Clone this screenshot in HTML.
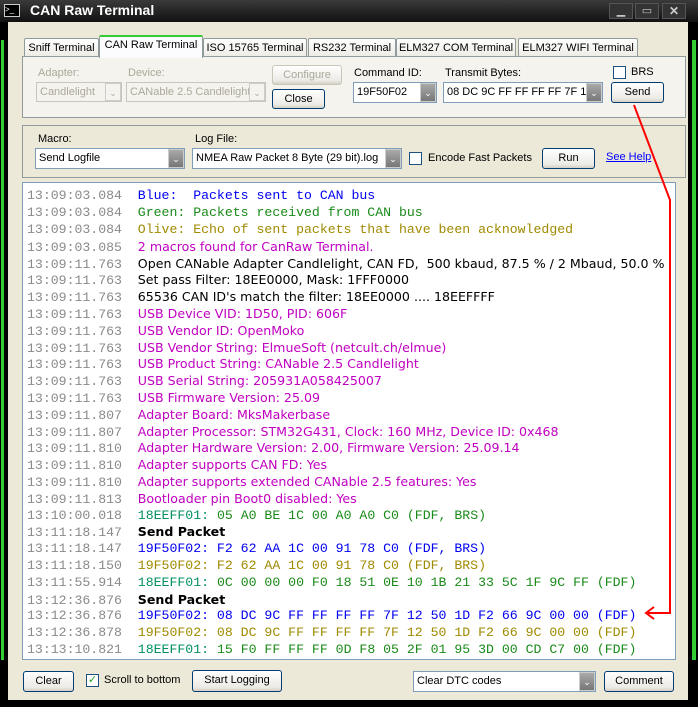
<!DOCTYPE html>
<html><head><style>
*{margin:0;padding:0;box-sizing:border-box}
body{width:698px;height:707px;background:#000;position:relative;overflow:hidden;font-family:"Liberation Sans",sans-serif;font-size:11px;color:#000}
.a{position:absolute}
.win{left:8px;top:22px;width:680px;height:678px;background:#ece9d8}
.title{left:0;top:0;width:698px;height:22px;background:linear-gradient(#3a3a3a,#111)}
.gb{background:#3c3;}
.tab{position:absolute;top:38px;height:19px;border:1px solid #919b9c;border-bottom:none;background:linear-gradient(#fff,#ecebe5);font-size:11px;padding:3px 0 0;text-align:center;white-space:nowrap;border-radius:2px 2px 0 0;overflow:hidden}
.panel{position:absolute;border:1px solid #919b9c;background:#f4f3ee}
.btn{position:absolute;border:1px solid #003c74;border-radius:3px;background:linear-gradient(#fff,#ecebe6 80%,#d6d0c5);text-align:center;font-size:11px;line-height:19px}
.cb{position:absolute;border:1px solid #7f9db9;background:#fff;font-size:11px;padding:3px 3px;white-space:nowrap;overflow:hidden}
.dd{position:absolute;right:0;top:0;bottom:0;width:16px;background:linear-gradient(#a9a9a9,#777);border:1px solid #ccc;color:#fff;font-size:9px;text-align:center;line-height:18px}
.lbl{position:absolute;font-size:11px}
.chk{position:absolute;width:13px;height:13px;border:1px solid #1c5180;background:#fff}
.log{left:22px;top:182px;width:654px;height:478px;background:#fff;border:1px solid #7f9db9}
.ln{position:absolute;left:4px;height:17px;white-space:pre;font-family:"Liberation Mono",monospace;font-size:13.2px;line-height:17px}
.ts{color:#8a8a8a}
.p{font-family:"DejaVu Sans",sans-serif;font-size:12.6px}
.B{color:#0000f0}.G{color:#1a8a1a}.O{color:#a08a00}.M{color:#c000c0}.K{color:#000}.T{color:#009060}
</style></head><body>
<div class="a title"></div>
<div class="a" style="left:4px;top:4px;width:16px;height:13px;border:1px solid #ccc;background:#000;color:#fff;font-size:8px;line-height:10px">&gt;_</div>
<div class="a" style="left:30px;top:2px;color:#fff;font-weight:bold;font-size:14px">CAN Raw Terminal</div>
<div class="a" style="left:609px;top:3px;width:24px;height:16px;background:#333;border:1px solid #555;color:#ccc;text-align:center;font-size:11px">▁</div>
<div class="a" style="left:635px;top:3px;width:24px;height:16px;background:#333;border:1px solid #555;color:#ccc;text-align:center;font-size:11px">▭</div>
<div class="a" style="left:662px;top:3px;width:24px;height:16px;background:#333;border:1px solid #555;color:#ccc;text-align:center;font-size:12px;font-weight:bold">✕</div>
<div class="a gb" style="left:1px;top:40px;width:3px;height:620px"></div>
<div class="a gb" style="left:692px;top:40px;width:4px;height:620px"></div>
<div class="a win"></div>

<div class="tab" style="left:24px;width:75px">Sniff Terminal</div>
<div class="tab" style="left:99px;top:35px;height:23px;width:104px;background:#fcfcfe;border-top:2px solid #3c3;z-index:2;padding-top:2px">CAN Raw Terminal</div>
<div class="tab" style="left:203px;width:104px">ISO 15765 Terminal</div>
<div class="tab" style="left:308px;width:88px">RS232 Terminal</div>
<div class="tab" style="left:396px;width:120px">ELM327 COM Terminal</div>
<div class="tab" style="left:518px;width:120px">ELM327 WIFI Terminal</div>
<div class="panel" style="left:22px;top:56px;width:664px;height:62px"></div>
<div class="lbl" style="left:38px;top:67px;color:#aca899">Adapter:</div>
<div class="lbl" style="left:128px;top:67px;color:#aca899">Device:</div>
<div class="cb" style="left:36px;top:82px;width:86px;height:20px;color:#aca899;background:#f4f3ee;border-color:#c9c7ba">Candlelight<div class="dd" style="background:#f4f3ee;color:#aaa">⌄</div></div>
<div class="cb" style="left:126px;top:82px;width:140px;height:20px;color:#aca899;background:#f4f3ee;border-color:#c9c7ba">CANable 2.5 Candlelight<div class="dd" style="background:#f4f3ee;color:#aaa">⌄</div></div>
<div class="btn" style="left:272px;top:65px;width:70px;height:20px;border-color:#c9c7ba;color:#aca899">Configure</div>
<div class="btn" style="left:272px;top:89px;width:53px;height:20px">Close</div>
<div class="lbl" style="left:354px;top:67px">Command ID:</div>
<div class="lbl" style="left:445px;top:67px">Transmit Bytes:</div>
<div class="cb" style="left:353px;top:82px;width:84px;height:21px">19F50F02<div class="dd">⌄</div></div>
<div class="cb" style="left:443px;top:82px;width:160px;height:21px">08 DC 9C FF FF FF FF 7F 12<div class="dd">⌄</div></div>
<div class="chk" style="left:613px;top:66px"></div>
<div class="lbl" style="left:631px;top:66px">BRS</div>
<div class="btn" style="left:611px;top:82px;width:53px;height:21px">Send</div>

<div class="panel" style="left:22px;top:125px;width:664px;height:53px;background:#ece9d8"></div>
<div class="lbl" style="left:38px;top:133px">Macro:</div>
<div class="lbl" style="left:195px;top:133px">Log File:</div>
<div class="cb" style="left:35px;top:148px;width:150px;height:21px">Send Logfile<div class="dd">⌄</div></div>
<div class="cb" style="left:192px;top:148px;width:210px;height:21px">NMEA Raw Packet 8 Byte (29 bit).log<div class="dd">⌄</div></div>
<div class="chk" style="left:409px;top:152px"></div>
<div class="lbl" style="left:428px;top:152px">Encode Fast Packets</div>
<div class="btn" style="left:542px;top:148px;width:53px;height:21px">Run</div>
<div class="lbl" style="left:606px;top:151px;color:#00f;text-decoration:underline">See Help</div>

<div class="a log">
<div class="ln" style="top:4px"><span class="ts">13:09:03.084</span>  <span class="B">Blue:  Packets sent to CAN bus</span></div>
<div class="ln" style="top:21px"><span class="ts">13:09:03.084</span>  <span class="G">Green: Packets received from CAN bus</span></div>
<div class="ln" style="top:38px"><span class="ts">13:09:03.084</span>  <span class="O">Olive: Echo of sent packets that have been acknowledged</span></div>
<div class="ln" style="top:55px"><span class="ts">13:09:03.085</span>  <span class="M p">2 macros found for CanRaw Terminal.</span></div>
<div class="ln" style="top:72px"><span class="ts">13:09:11.763</span>  <span class="K p">Open CANable Adapter Candlelight, CAN FD,  500 kbaud, 87.5 % / 2 Mbaud, 50.0 %</span></div>
<div class="ln" style="top:88px"><span class="ts">13:09:11.763</span>  <span class="K p">Set pass Filter: 18EE0000, Mask: 1FFF0000</span></div>
<div class="ln" style="top:105px"><span class="ts">13:09:11.763</span>  <span class="K p">65536 CAN ID's match the filter: 18EE0000 .... 18EEFFFF</span></div>
<div class="ln" style="top:122px"><span class="ts">13:09:11.763</span>  <span class="M p">USB Device VID: 1D50, PID: 606F</span></div>
<div class="ln" style="top:139px"><span class="ts">13:09:11.763</span>  <span class="M p">USB Vendor ID: OpenMoko</span></div>
<div class="ln" style="top:156px"><span class="ts">13:09:11.763</span>  <span class="M p">USB Vendor String: ElmueSoft (netcult.ch/elmue)</span></div>
<div class="ln" style="top:172px"><span class="ts">13:09:11.763</span>  <span class="M p">USB Product String: CANable 2.5 Candlelight</span></div>
<div class="ln" style="top:189px"><span class="ts">13:09:11.763</span>  <span class="M p">USB Serial String: 205931A058425007</span></div>
<div class="ln" style="top:206px"><span class="ts">13:09:11.763</span>  <span class="M p">USB Firmware Version: 25.09</span></div>
<div class="ln" style="top:223px"><span class="ts">13:09:11.807</span>  <span class="M p">Adapter Board: MksMakerbase</span></div>
<div class="ln" style="top:240px"><span class="ts">13:09:11.807</span>  <span class="M p">Adapter Processor: STM32G431, Clock: 160 MHz, Device ID: 0x468</span></div>
<div class="ln" style="top:256px"><span class="ts">13:09:11.810</span>  <span class="M p">Adapter Hardware Version: 2.00, Firmware Version: 25.09.14</span></div>
<div class="ln" style="top:273px"><span class="ts">13:09:11.810</span>  <span class="M p">Adapter supports CAN FD: Yes</span></div>
<div class="ln" style="top:290px"><span class="ts">13:09:11.810</span>  <span class="M p">Adapter supports extended CANable 2.5 features: Yes</span></div>
<div class="ln" style="top:307px"><span class="ts">13:09:11.813</span>  <span class="M p">Bootloader pin Boot0 disabled: Yes</span></div>
<div class="ln" style="top:324px"><span class="ts">13:10:00.018</span>  <span class="T">18EEFF01:</span> <span class="G">05 A0 BE 1C 00 A0 A0 C0 (FDF, BRS)</span></div>
<div class="ln" style="top:340px"><span class="ts">13:11:18.147</span>  <span class="K p" style="font-weight:bold">Send Packet</span></div>
<div class="ln" style="top:357px"><span class="ts">13:11:18.147</span>  <span class="B">19F50F02: F2 62 AA 1C 00 91 78 C0 (FDF, BRS)</span></div>
<div class="ln" style="top:374px"><span class="ts">13:11:18.150</span>  <span class="O">19F50F02: F2 62 AA 1C 00 91 78 C0 (FDF, BRS)</span></div>
<div class="ln" style="top:391px"><span class="ts">13:11:55.914</span>  <span class="T">18EEFF01:</span> <span class="G">0C 00 00 00 F0 18 51 0E 10 1B 21 33 5C 1F 9C FF (FDF)</span></div>
<div class="ln" style="top:408px"><span class="ts">13:12:36.876</span>  <span class="K p" style="font-weight:bold">Send Packet</span></div>
<div class="ln" style="top:424px"><span class="ts">13:12:36.876</span>  <span class="B">19F50F02: 08 DC 9C FF FF FF FF 7F 12 50 1D F2 66 9C 00 00 (FDF)</span></div>
<div class="ln" style="top:441px"><span class="ts">13:12:36.878</span>  <span class="O">19F50F02: 08 DC 9C FF FF FF FF 7F 12 50 1D F2 66 9C 00 00 (FDF)</span></div>
<div class="ln" style="top:458px"><span class="ts">13:13:10.821</span>  <span class="T">18EEFF01:</span> <span class="G">15 F0 FF FF FF 0D F8 05 2F 01 95 3D 00 CD C7 00 (FDF)</span></div>
</div>

<svg class="a" style="left:0;top:0" width="698" height="707"><g stroke="#f00" stroke-width="2" fill="none"><path d="M634 105 L670 200 L670 613 L648 613"/><path d="M654 607 L646 613 L654 619"/></g></svg>

<div class="btn" style="left:23px;top:671px;width:51px;height:21px">Clear</div>
<div class="chk" style="left:86px;top:674px;text-align:center;font-size:11px;line-height:11px;color:#21a121">✓</div>
<div class="lbl" style="left:104px;top:674px">Scroll to bottom</div>
<div class="btn" style="left:192px;top:670px;width:90px;height:22px">Start Logging</div>
<div class="cb" style="left:413px;top:671px;width:183px;height:21px">Clear DTC codes<div class="dd">⌄</div></div>
<div class="btn" style="left:604px;top:671px;width:70px;height:21px">Comment</div>
</body></html>
